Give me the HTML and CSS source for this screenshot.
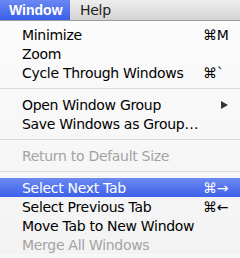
FILE: index.html
```html
<!DOCTYPE html>
<html lang="en">
<head>
    <meta charset="UTF-8">
    <title>Window Menu</title>
    <link rel="stylesheet" href="styles.css">
</head>
<body>
    <div class="menubar">
        <span class="title active">Window</span>
        <span class="title">Help</span>
    </div>
    <ul class="menu">
        <li class="item"><span>Minimize</span><span class="key">⌘M</span></li>
        <li class="item"><span>Zoom</span></li>
        <li class="item"><span>Cycle Through Windows</span><span class="key">⌘`</span></li>
        <li class="sep"></li>
        <li class="item"><span>Open Window Group</span><span class="arrow"></span></li>
        <li class="item"><span>Save Windows as Group…</span></li>
        <li class="sep"></li>
        <li class="item disabled"><span>Return to Default Size</span></li>
        <li class="sep"></li>
        <li class="item selected"><span>Select Next Tab</span><span class="key">⌘→</span></li>
        <li class="item"><span>Select Previous Tab</span><span class="key">⌘←</span></li>
        <li class="item"><span>Move Tab to New Window</span></li>
        <li class="item disabled"><span>Merge All Windows</span></li>
    </ul>
</body>
</html>
```

FILE: styles.css
```css
body {
    margin: 0;
    width: 240px;
    height: 258px;
    overflow: hidden;
    background-color: #f7f7f7;
    font-family: "DejaVu Sans", sans-serif;
    font-size: 14px;
    letter-spacing: -0.3px;
    color: #000;
}
.menubar {
    display: flex;
    height: 20px;
    background: linear-gradient(#eeeeee, #d3d3d3);
    border-bottom: 1px solid #9c9c9c;
}
.title {
    display: flex;
    align-items: center;
    padding: 0 10px 0 10px;
    color: #222;
}
.title.active {
    width: 51px;
    font-family: "Liberation Sans", sans-serif;
    font-weight: bold;
    font-size: 14px;
    letter-spacing: 0;
    color: #fff;
    padding-left: 9px;
    background: linear-gradient(#6a88f2, #3a5fe9);
}
.menu {
    list-style: none;
    margin: 0;
    padding: 4px 0 0 0;
    background: linear-gradient(#fbfbfb, #f3f3f3);
}
.item {
    display: flex;
    align-items: center;
    justify-content: space-between;
    height: 19px;
    padding: 0 0 0 22px;
}
.key {
    width: 37px;
}
.selected {
    background: linear-gradient(#6c8af2, #3d60e9);
    color: #fff;
}
.disabled {
    color: #a3a3a3;
}
.sep {
    height: 13px;
    display: flex;
    align-items: center;
}
.sep::after {
    content: "";
    flex: 1;
    border-top: 1px solid #dcdcdc;
}
.arrow {
    width: 0;
    height: 0;
    margin-right: 12px;
    border-top: 4px solid transparent;
    border-bottom: 4px solid transparent;
    border-left: 7px solid #333;
}
```
